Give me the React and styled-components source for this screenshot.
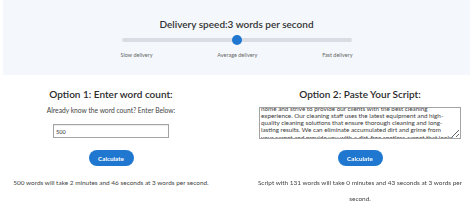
import React, { useEffect, useRef } from "react";
import styled, { createGlobalStyle } from "styled-components";

const GlobalStyle = createGlobalStyle`
  body {
    margin: 0;
    background: #ffffff;
    font-family: Lato, "Open Sans", sans-serif;
    color: #333333;
  }
`;

const BLUE = "#1f77d0";

const SCRIPT_TEXT =
  "Professional carpet and upholstery cleaning.\n" +
  "We know how important it is for you to have a clean and\n" +
  "home and strive to provide our clients with the best cleaning experience. " +
  "Our cleaning staff uses the latest equipment and high-quality cleaning solutions " +
  "that ensure thorough cleaning and long-lasting results. We can eliminate accumulated " +
  "dirt and grime from your carpet and provide you with a dirt-free spotless carpet that " +
  "looks and feels like new again. Our technicians are trained, insured and friendly, and " +
  "we always arrive on time. Call us today to book an appointment and enjoy a fresher home.";

const Page = styled.div`
  width: 474px;
`;

const SpeedPanel = styled.section`
  margin: 0 4px 0 3px;
  height: 75px;
  box-sizing: border-box;
  padding-top: 17px;
  background: #f4f8fc;
  display: flex;
  flex-direction: column;
  align-items: center;
`;

const SpeedTitle = styled.h2`
  margin: 0;
  font-size: 10px;
  line-height: 14px;
  font-weight: 600;
  color: #333333;
`;

const SpeedSlider = styled.input`
  -webkit-appearance: none;
  appearance: none;
  width: 230px;
  height: 10px;
  margin: 4px 0 0;
  padding: 0;
  background: transparent;

  &::-webkit-slider-runnable-track {
    height: 4px;
    border-radius: 2px;
    background: #d9dde3;
  }

  &::-webkit-slider-thumb {
    -webkit-appearance: none;
    width: 10px;
    height: 10px;
    margin-top: -3px;
    border-radius: 50%;
    background: ${BLUE};
    border: none;
  }
`;

const SpeedLabels = styled.div`
  width: 232px;
  margin-top: 6px;
  display: flex;
  justify-content: space-between;
  font-size: 5.5px;
  line-height: 8px;
  color: #666666;
`;

const Options = styled.div`
  display: grid;
  grid-template-columns: 1fr 1fr;
  column-gap: 31px;
  padding: 0 5px 0 2px;
`;

const Option = styled.div`
  display: flex;
  flex-direction: column;
  align-items: center;
  padding-top: 12px;
`;

const OptionTitle = styled.h3`
  margin: 0;
  font-size: 10px;
  line-height: 14px;
  font-weight: 600;
  color: #2b2b2b;
`;

const Hint = styled.p`
  margin: 5px 0 0;
  font-size: 6.7px;
  line-height: 8px;
  color: #444444;
`;

const CountInput = styled.input`
  box-sizing: border-box;
  width: 116px;
  height: 14px;
  margin-top: 10px;
  padding: 0 2px;
  border: 1px solid #a3a3a3;
  box-shadow: inset 0 1px 1px rgba(0, 0, 0, 0.08);
  font-family: Lato, sans-serif;
  font-size: 5.6px;
  color: #333333;
  outline: none;
`;

const ScriptArea = styled.textarea`
  box-sizing: border-box;
  width: 202px;
  height: 32px;
  margin-top: 6px;
  padding: 0 6px 0 1px;
  border: 1px solid #a3a3a3;
  font-family: Lato, sans-serif;
  font-size: 6.3px;
  line-height: 7.3px;
  color: #3a3a3a;
  resize: vertical;
  outline: none;

  &::-webkit-scrollbar {
    width: 5px;
  }
  &::-webkit-scrollbar-button:single-button {
    display: block;
    height: 6px;
    background: #f1f1f1;
  }
  &::-webkit-scrollbar-button:single-button:vertical:decrement {
    background: linear-gradient(to top, #f1f1f1 0 1px, transparent 1px),
      conic-gradient(from 150deg at 50% 35%, #777 0 60deg, #f1f1f1 60deg);
  }
  &::-webkit-scrollbar-button:single-button:vertical:increment {
    background: conic-gradient(from -30deg at 50% 65%, #777 0 60deg, #f1f1f1 60deg);
  }
  &::-webkit-scrollbar-track {
    background: #f1f1f1;
  }
  &::-webkit-scrollbar-thumb {
    background: #b8b8b8;
  }
`;

const CalcButton = styled.button`
  width: 45px;
  height: 16px;
  margin-top: ${({ $gap }) => $gap}px;
  padding: 0;
  border: none;
  border-radius: 8px;
  background: ${BLUE};
  color: #ffffff;
  font-family: Lato, sans-serif;
  font-size: 6.3px;
  font-weight: 700;
  cursor: pointer;
`;

const Result = styled.p`
  margin: 9px 0 0;
  font-size: 6.45px;
  line-height: 16px;
  color: #444444;
  text-align: center;
`;

export default function App() {
  const areaRef = useRef(null);

  useEffect(() => {
    // skip the first two lines so the text starts partly scrolled
    if (areaRef.current) areaRef.current.scrollTop = 7.3 * 2 + 3;
  }, []);

  return (
    <Page>
      <GlobalStyle />
      <SpeedPanel>
        <SpeedTitle>Delivery speed:3 words per second</SpeedTitle>
        <SpeedSlider type="range" min="1" max="5" defaultValue="3" />
        <SpeedLabels>
          <span>Slow delivery</span>
          <span>Average delivery</span>
          <span>Fast delivery</span>
        </SpeedLabels>
      </SpeedPanel>

      <Options>
        <Option>
          <OptionTitle>Option 1: Enter word count:</OptionTitle>
          <Hint>Already know the word count? Enter Below:</Hint>
          <CountInput type="text" defaultValue="500" />
          <CalcButton $gap={12}>Calculate</CalcButton>
          <Result>500 words will take 2 minutes and 46 seconds at 3 words per second.</Result>
        </Option>

        <Option>
          <OptionTitle>Option 2: Paste Your Script:</OptionTitle>
          <ScriptArea ref={areaRef} defaultValue={SCRIPT_TEXT} />
          <CalcButton $gap={11}>Calculate</CalcButton>
          <Result>
            Script with 131 words will take 0 minutes and 43 seconds at 3 words per second.
          </Result>
        </Option>
      </Options>
    </Page>
  );
}
